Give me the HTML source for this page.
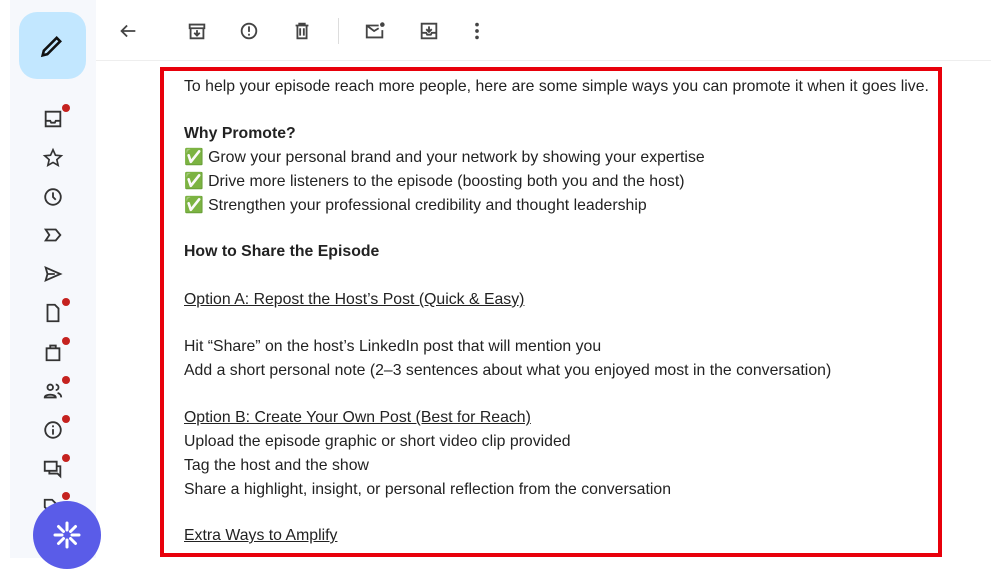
<!DOCTYPE html>
<html><head><style>
body{margin:0;width:991px;height:565px;background:#fff;position:relative;overflow:hidden;font-family:"Liberation Sans",Arial,sans-serif;color:#222}
.side{position:absolute;left:10px;top:0;width:86px;height:558px;background:#f6f8fc}
.compose{position:absolute;left:19px;top:12px;width:67px;height:67px;border-radius:18px;background:#c2e7ff}
.ic{position:absolute;left:42px;width:22px;height:22px}
.dot{position:absolute;left:62px;width:8px;height:8px;border-radius:50%;background:#c5221f}
.tb{position:absolute;top:20px;width:22px;height:22px}
.box{position:absolute;left:160px;top:67px;width:774px;height:482px;border:4px solid #e8000b}
.t{position:absolute;left:184px;font-size:15.8px;line-height:20px;white-space:nowrap;letter-spacing:0.02px}
u{text-decoration:underline}
.fab{position:absolute;left:33px;top:501px;width:68px;height:68px;border-radius:50%;background:#5a5ce8}
.hdr{position:absolute;left:96px;top:60px;width:895px;height:1px;background:#eee}
</style></head><body>
<div class="side"></div>
<div class="compose"></div>
<svg style="position:absolute;left:38px;top:32px" width="28" height="28" viewBox="0 0 24 24"><path d="M4 20l1-4L16 5l3 3L8 19z" fill="none" stroke="#111" stroke-width="2.2"/></svg>
<div class="hdr"></div>
<svg class="tb" style="left:117px" viewBox="0 0 24 24"><path d="M20 12H5M11 6l-6 6 6 6" fill="none" stroke="#444" stroke-width="2"/></svg>
<svg class="tb" style="left:186px" viewBox="0 0 24 24"><path d="M4 5h16v4H4zM5 9v11h14V9M12 11v6M9 14l3 3 3-3" fill="none" stroke="#444" stroke-width="2"/></svg>
<svg class="tb" style="left:238px" viewBox="0 0 24 24"><circle cx="12" cy="12" r="8" fill="none" stroke="#444" stroke-width="2"/><path d="M12 7v6M12 15v2" stroke="#444" stroke-width="2"/></svg>
<svg class="tb" style="left:291px" viewBox="0 0 24 24"><path d="M5 6h14M9 6V4h6v2M7 6v14h10V6M10 9v8M14 9v8" fill="none" stroke="#444" stroke-width="2"/></svg>
<div style="position:absolute;left:338px;top:18px;width:1px;height:26px;background:#ddd"></div>
<svg class="tb" style="left:364px" viewBox="0 0 24 24"><path d="M16 6H3v13h17v-8M3 6l8 6 5-3" fill="none" stroke="#444" stroke-width="2"/><circle cx="20" cy="5" r="2.5" fill="#444"/></svg>
<svg class="tb" style="left:418px" viewBox="0 0 24 24"><path d="M4 4h16v16H4zM4 14h5l1 2h4l1-2h5M12 7v5M9 10l3 3 3-3" fill="none" stroke="#444" stroke-width="2"/></svg>
<svg class="tb" style="left:466px" viewBox="0 0 24 24"><circle cx="12" cy="5" r="2" fill="#444"/><circle cx="12" cy="12" r="2" fill="#444"/><circle cx="12" cy="19" r="2" fill="#444"/></svg>

<svg class="ic" style="top:108px" viewBox="0 0 24 24"><path d="M4 4h16v16H4zM4 14h5l1 2h4l1-2h5" fill="none" stroke="#333" stroke-width="2"/></svg><div class="dot" style="top:104px"></div>
<svg class="ic" style="top:147px" viewBox="0 0 24 24"><path d="M12 3l2.7 6 6.3.6-4.8 4.2 1.4 6.2L12 16.8 6.4 20l1.4-6.2L3 9.6 9.3 9z" fill="none" stroke="#333" stroke-width="1.8"/></svg>
<svg class="ic" style="top:186px" viewBox="0 0 24 24"><circle cx="12" cy="12" r="8.5" fill="none" stroke="#333" stroke-width="2"/><path d="M12 7v5l3 3" fill="none" stroke="#333" stroke-width="2"/></svg>
<svg class="ic" style="top:224px" viewBox="0 0 24 24"><path d="M4 6h11l5 6-5 6H4l4-6z" fill="none" stroke="#333" stroke-width="2"/></svg>
<svg class="ic" style="top:263px" viewBox="0 0 24 24"><path d="M4 5l16 7-16 7 2-7zM6 12h8" fill="none" stroke="#333" stroke-width="2"/></svg>
<svg class="ic" style="top:302px" viewBox="0 0 24 24"><path d="M6 3h8l4 4v14H6z" fill="none" stroke="#333" stroke-width="2"/></svg><div class="dot" style="top:298px"></div>
<svg class="ic" style="top:341px" viewBox="0 0 24 24"><path d="M5 8h14v13H5zM9 8V5h6v3" fill="none" stroke="#333" stroke-width="2"/></svg><div class="dot" style="top:337px"></div>
<svg class="ic" style="top:380px" viewBox="0 0 24 24"><circle cx="9" cy="8" r="3" fill="none" stroke="#333" stroke-width="2"/><path d="M3 19c0-4 12-4 12 0zM15 5a3 3 0 010 6M17 14c3 1 4 3 4 5" fill="none" stroke="#333" stroke-width="2"/></svg><div class="dot" style="top:376px"></div>
<svg class="ic" style="top:419px" viewBox="0 0 24 24"><circle cx="12" cy="12" r="8.5" fill="none" stroke="#333" stroke-width="2"/><path d="M12 11v6M12 7v2" stroke="#333" stroke-width="2"/></svg><div class="dot" style="top:415px"></div>
<svg class="ic" style="top:458px" viewBox="0 0 24 24"><path d="M3 4h13v10H3zM8 14v3h9l3 3V9h-4" fill="none" stroke="#333" stroke-width="2"/></svg><div class="dot" style="top:454px"></div>
<svg class="ic" style="top:497px" viewBox="0 0 24 24"><path d="M3 3h8l10 10-8 8L3 11z" fill="none" stroke="#333" stroke-width="2"/></svg><div class="dot" style="top:492px"></div>
<div class="fab"></div>
<svg style="position:absolute;left:53px;top:521px" width="28" height="28" viewBox="0 0 28 28"><g stroke="#fff" stroke-width="3" stroke-linecap="round"><path d="M14 2v7M14 19v7M2 14h7M19 14h7M5.5 5.5l5 5M17.5 17.5l5 5M22.5 5.5l-5 5M10.5 17.5l-5 5"/></g></svg>

<div class="box"></div>
<div class="t" style="top:77px">To help your episode reach more people, here are some simple ways you can promote it when it goes live.</div>
<div class="t" style="top:124px"><b>Why Promote?</b></div>
<div class="t" style="top:148px">✅ Grow your personal brand and your network by showing your expertise</div>
<div class="t" style="top:172px">✅ Drive more listeners to the episode (boosting both you and the host)</div>
<div class="t" style="top:196px">✅ Strengthen your professional credibility and thought leadership</div>
<div class="t" style="top:242px"><b>How to Share the Episode</b></div>
<div class="t" style="top:290px"><u>Option A: Repost the Host’s Post (Quick &amp; Easy)</u></div>
<div class="t" style="top:337px">Hit “Share” on the host’s LinkedIn post that will mention you</div>
<div class="t" style="top:361px">Add a short personal note (2–3 sentences about what you enjoyed most in the conversation)</div>
<div class="t" style="top:408px"><u>Option B: Create Your Own Post (Best for Reach)</u></div>
<div class="t" style="top:432px">Upload the episode graphic or short video clip provided</div>
<div class="t" style="top:456px">Tag the host and the show</div>
<div class="t" style="top:480px">Share a highlight, insight, or personal reflection from the conversation</div>
<div class="t" style="top:526px"><u>Extra Ways to Amplify</u></div>
</body></html>
